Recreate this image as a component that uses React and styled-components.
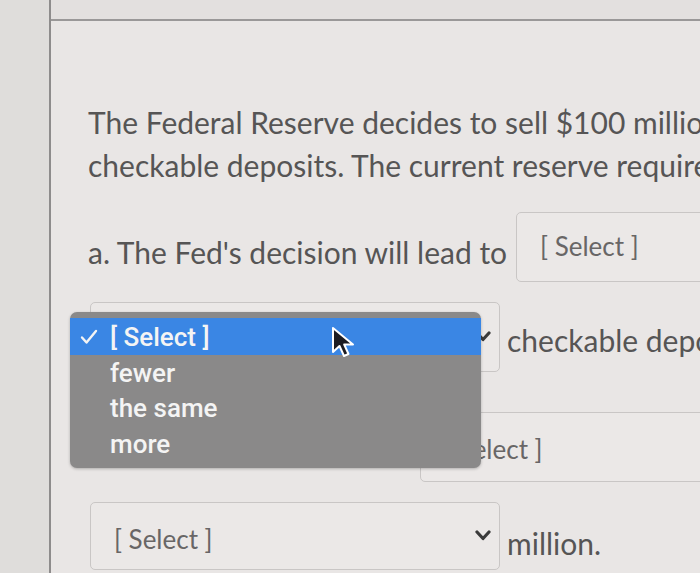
import React from "react";
import styled, { createGlobalStyle } from "styled-components";

const Global = createGlobalStyle`
  html, body { margin: 0; padding: 0; }
  body {
    width: 700px; height: 573px; overflow: hidden;
    background: #e9e6e5;
    font-family: "Lato", "Open Sans", sans-serif;
  }
`;

const Page = styled.div`
  display: flex;
  width: 700px;
  height: 573px;
  overflow: hidden;
`;

const Rail = styled.div`
  flex: 0 0 49px;
  background: #dfdddb;
  border-right: 2px solid #8e8c8c;
`;

const Main = styled.div`
  flex: 1;
  display: flex;
  flex-direction: column;
  min-width: 0;
`;

const TopBar = styled.div`
  height: 19px;
  background: #e3e0df;
  border-bottom: 2px solid #9a9898;
`;

const Content = styled.div`
  padding: 80px 0 0 37px;
  color: #565555;
  width: 1000px;
`;

const Para = styled.p`
  margin: 0;
  font-size: 30px;
  line-height: 43px;
  white-space: nowrap;
`;

const Row = styled.div`
  display: flex;
  align-items: center;
  gap: ${(p) => p.$gap || 8}px;
  margin-top: ${(p) => p.$top}px;
  margin-left: ${(p) => p.$indent || 0}px;
  font-size: 30px;
  white-space: nowrap;
`;

const Label = styled.span`
  padding-top: ${(p) => p.$dy || 0}px;
`;

const SelectBox = styled.div`
  position: relative;
  box-sizing: border-box;
  width: ${(p) => p.$w}px;
  height: ${(p) => p.$h || 70}px;
  border: 1.5px solid #c9c6c5;
  border-radius: 5px;
  background: #ebe8e7;
  display: flex;
  align-items: center;
  justify-content: space-between;
  padding: 0 6px 0 23px;
  flex: 0 0 auto;
`;

const SelectText = styled.span`
  font-size: 26px;
  color: #686666;
  margin-top: ${(p) => p.$dy || 0}px;
`;

const Chevron = styled.svg`
  width: 16px;
  height: 12px;
  margin-right: 2px;
`;

const Menu = styled.div`
  position: absolute;
  top: 9px;
  left: -21px;
  width: 411px;
  height: 156px;
  box-sizing: border-box;
  padding: 6px 0;
  background: #8a8989;
  border-radius: 7px;
  box-shadow: 0 1px 3px rgba(0,0,0,0.25);
  font-family: "Roboto", "Liberation Sans", sans-serif;
  z-index: 5;
`;

const Item = styled.div`
  display: flex;
  align-items: center;
  height: ${(p) => (p.$active ? 37 : 35.5)}px;
  padding-left: 10px;
  background: ${(p) => (p.$active ? "#3a86e4" : "transparent")};
  color: #f4f4f4;
  font-size: 26px;
  font-weight: 500;
`;

const CheckIcon = styled.svg`
  width: 18px;
  height: 16px;
  margin-right: 12px;
  flex: 0 0 auto;
`;

const Spacer = styled.span`
  width: 30px;
  flex: 0 0 auto;
`;

const Cursor = styled.svg`
  position: absolute;
  left: 261px;
  top: 14px;
  width: 28px;
  height: 34px;
`;

const ChevronIcon = () => (
  <Chevron viewBox="0 0 16 12">
    <path d="M2 2 L8 8.5 L14 2" fill="none" stroke="#3a3a3a" strokeWidth="3.2" strokeLinecap="round" strokeLinejoin="round" />
  </Chevron>
);

export default function App() {
  return (
    <>
      <Global />
      <Page>
        <Rail />
        <Main>
          <TopBar />
          <Content>
            <Para>
              The Federal Reserve decides to sell $100 million
              <br />
              checkable deposits. The current reserve requirement
            </Para>
            <Row $top={25} $gap={9}>
              <Label $dy={10}>a. The Fed's decision will lead to</Label>
              <SelectBox $w={260}>
                <SelectText $dy={-2}>[ Select ]</SelectText>
                <ChevronIcon />
              </SelectBox>
            </Row>
            <Row $top={20} $indent={2} $gap={7}>
              <SelectBox $w={410}>
                <SelectText>[ Select ]</SelectText>
                <ChevronIcon />
                <Menu>
                  <Item $active>
                    <CheckIcon viewBox="0 0 18 16">
                      <path d="M2 8.5 L6.5 13.5 L16 2" fill="none" stroke="#f4f4f4" strokeWidth="2.4" strokeLinecap="round" strokeLinejoin="round" />
                    </CheckIcon>
                    [ Select ]
                  </Item>
                  <Item>
                    <Spacer />fewer
                  </Item>
                  <Item>
                    <Spacer />the same
                  </Item>
                  <Item>
                    <Spacer />more
                  </Item>
                  <Cursor viewBox="0 0 28 34">
                    <path d="M2 2 L2 26 L8.5 20 L13 30 L17.5 28 L13.2 18.5 L22 18.5 Z" fill="#1c1c22" stroke="#ffffff" strokeWidth="2" strokeLinejoin="round" />
                  </Cursor>
                </Menu>
              </SelectBox>
              <Label $dy={6}>checkable deposits.</Label>
            </Row>
            <Row $top={40} $indent={332}>
              <SelectBox $w={300}>
                <SelectText $dy={4}>[ Select ]</SelectText>
              </SelectBox>
            </Row>
            <Row $top={20} $indent={2} $gap={7}>
              <SelectBox $w={410} $h={68}>
                <SelectText $dy={6}>[ Select ]</SelectText>
                <ChevronIcon />
              </SelectBox>
              <Label $dy={14}>million.</Label>
            </Row>
          </Content>
        </Main>
      </Page>
    </>
  );
}
